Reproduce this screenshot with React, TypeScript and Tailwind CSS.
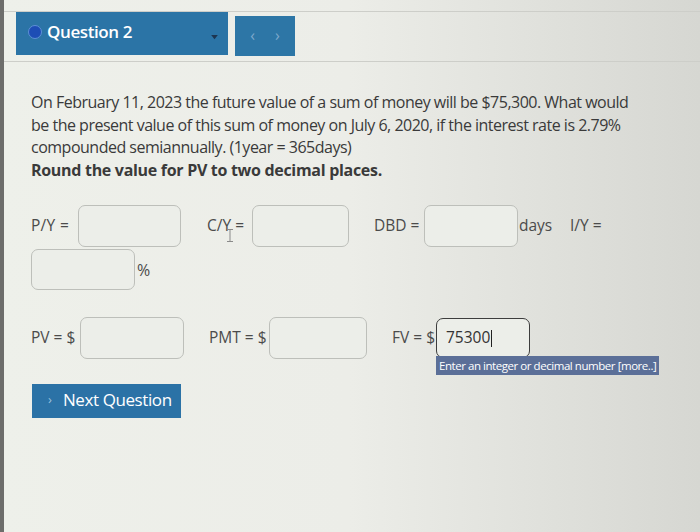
import React from "react";

const font = { fontFamily: '"Open Sans", "Noto Sans", sans-serif' };

function Box({ w, h = 42, className = "" }: { w: number; h?: number; className?: string }) {
  return (
    <div
      className={"shrink-0 rounded-[7px] border border-[#bdbfba] bg-[#eceee9] " + className}
      style={{ width: w, height: h }}
    />
  );
}

export default function App() {
  return (
    <div
      className="relative flex h-[532px] w-[700px] overflow-hidden bg-linear-to-r from-[#eef0ea] via-[#ecede8] to-[#d6d7d2] text-[#3d3d3d]"
      style={font}
    >
      <div className="w-[4px] shrink-0 bg-[#6d6d6b]" />
      <div className="flex flex-1 flex-col">
        {/* header */}
        <div className="mt-[11px] flex h-[51px] items-start gap-[7px] border-t border-b border-[#cdcec9] pl-[12px]">
          <div className="flex h-[43px] w-[212px] items-center bg-[#2b74a6] pb-[3px] pl-[12px] pr-[10px]">
            <span className="h-[14px] w-[14px] rounded-full border border-[#5d8fd6] bg-[#1d4db5]" />
            <span className="ml-[5px] text-[17px] font-semibold tracking-[-0.4px] text-white">Question 2</span>
            <svg className="ml-auto mt-[10px]" width="7" height="5" viewBox="0 0 8 6">
              <path d="M0 0 L8 0 L4 5 Z" fill="#1d3550" />
            </svg>
          </div>
          <div className="mt-[4px] flex h-[40px] w-[60px] items-center justify-center gap-[20px] bg-[#2d76a6] pb-[2px] text-[16px] text-[#7fa9cc]">
            <span>&lsaquo;</span>
            <span>&rsaquo;</span>
          </div>
        </div>

        {/* question text */}
        <div className="mt-[29px] pl-[27px] text-[16px] leading-[22.5px] text-[#3a3a3a]">
          <p className="whitespace-nowrap tracking-[-0.5px]">
            On February 11, 2023 the future value of a sum of money will be $75,300. What would
            <br />
            be the present value of this sum of money on July 6, 2020, if the interest rate is 2.79%
            <br />
            compounded semiannually. (1year = 365days)
          </p>
          <p className="whitespace-nowrap font-bold tracking-[-0.3px]">Round the value for PV to two decimal places.</p>
        </div>

        {/* row 1 */}
        <div className="mt-[24px] flex items-center pl-[27px] text-[15.5px] text-[#4b4b4b]">
          <span className="w-[47px] shrink-0 tracking-[0.3px]">P/Y =</span>
          <Box w={103} />
          <span className="relative ml-[26px] w-[45px] shrink-0">
            C/Y =
            <svg className="absolute left-[19px] top-[15px]" width="8" height="13" viewBox="0 0 8 13">
              <path d="M1 0.5 H7 M4 0.5 V12.5 M1 12.5 H7" stroke="#8a8a8a" strokeWidth="1" fill="none" />
            </svg>
          </span>
          <Box w={97} />
          <span className="ml-[25px] w-[50px] shrink-0">DBD =</span>
          <Box w={94} />
          <span className="ml-[1px] w-[51px] shrink-0">days</span>
          <span className="shrink-0">I/Y =</span>
        </div>

        {/* row 2 */}
        <div className="mt-[2px] flex items-center pl-[27px] text-[16px] text-[#4b4b4b]">
          <Box w={104} h={41} />
          <span className="ml-[2px]">%</span>
        </div>

        {/* row 3 */}
        <div className="mt-[27px] flex items-center pl-[27px] text-[15.5px] text-[#4b4b4b]">
          <span className="w-[49px] shrink-0">PV = $</span>
          <Box w={104} h={42} />
          <span className="ml-[25px] w-[60px] shrink-0">PMT = $</span>
          <Box w={98} h={42} />
          <span className="ml-[25px] w-[44px] shrink-0">FV = $</span>
          <div className="relative">
            <div className="flex h-[40px] w-[94px] items-center rounded-[7px] border-[1.5px] border-[#3d3d3d] bg-[#eceee9] pl-[9px] text-[15.5px] text-[#333]">
              75300<span className="ml-[1px] h-[17px] w-[1px] bg-[#222]" />
            </div>
            <div className="absolute left-0 top-[38px] whitespace-nowrap bg-[#5b6f98] px-[3px] text-[11.5px] font-medium leading-[19px] tracking-[-0.45px] text-white">
              Enter an integer or decimal number [more..]
            </div>
          </div>
        </div>

        {/* next button */}
        <div className="mt-[25px] pl-[28px]">
          <div className="flex h-[34px] w-[149px] items-center bg-[#2b72a6] pb-[2px] pl-[16px] text-white">
            <span className="text-[13px] text-[#9cc0dc]">&#x203A;</span>
            <span className="ml-[11px] text-[17px] tracking-[-0.4px]">Next Question</span>
          </div>
        </div>
      </div>
    </div>
  );
}
